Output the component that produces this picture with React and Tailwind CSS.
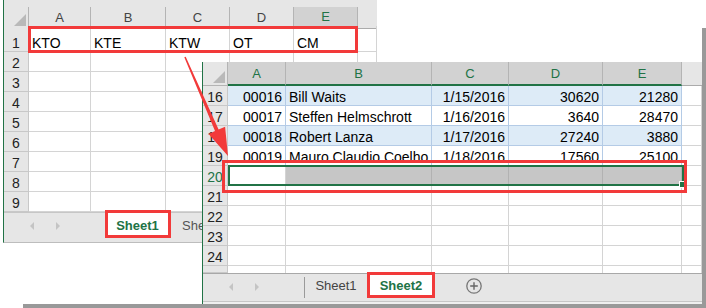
import React from 'react';

// two overlapping Excel windows with red call-out boxes and an arrow
const W1 = 'grid grid-cols-[25px_62px_75px_64px_64px_64px_19px]';
const W2 = 'grid grid-cols-[25px_58px_146px_77px_94px_79px_20px]';

function Corner() {
  return (
    <div className="flex items-end justify-end pr-[2px] pb-[2px] bg-[#e6e6e6] border-r border-b border-[#b4b4b4]">
      <span className="w-0 h-0 border-l-[12px] border-l-transparent border-b-[12px] border-b-[#b9b9b9]" />
    </div>
  );
}

function Arrows() {
  return (
    <div className="flex items-center gap-[22px] pl-[26px] w-[101px] h-[25px]">
      <span className="w-0 h-0 border-y-[4px] border-y-transparent border-r-[4px] border-r-[#c4c4c4]" />
      <span className="w-0 h-0 border-y-[4px] border-y-transparent border-l-[4px] border-l-[#c4c4c4]" />
    </div>
  );
}

const rowHead = 'flex items-end justify-center pb-[1px] bg-[#e6e6e6] border-r border-b border-[#c8c8c8] text-[14px] leading-[14px] text-[#222] overflow-hidden';
const cell = 'flex items-end px-[3px] border-r border-b text-[14px] leading-[16px] text-black whitespace-nowrap overflow-hidden';

function Window1() {
  const row1 = ['KTO', 'KTE', 'KTW', 'OT', 'CM'];
  return (
    <div className="absolute left-[3px] top-0 w-[374px] h-[243px] flex flex-col bg-white border-l border-b border-l-[#217346] border-b-[#bdbdbd]">
      <div className="h-[7px] bg-[#e6e6e6]" />
      <div className={`${W1} h-[19px]`}>
        <Corner />
        {['A', 'B', 'C', 'D'].map((l) => (
          <div key={l} className="flex items-center justify-center bg-[#e6e6e6] border-r border-b border-[#b4b4b4] text-[13px] text-[#444]">
            {l}
          </div>
        ))}
        <div className="flex items-center justify-center bg-[#d2d2d2] border-r border-r-[#b4b4b4] border-b-2 border-b-[#217346] text-[13px] text-[#217346]">
          E
        </div>
        <div className="bg-[#e6e6e6] border-b border-[#ababab]" />
      </div>
      <div className={`${W1} h-[26px]`}>
        <div className={rowHead}>1</div>
        {row1.map((t) => (
          <div key={t} className={`${cell} border-[#d4d4d4]`}>{t}</div>
        ))}
        <div className={`${cell} border-[#d4d4d4]`} />
      </div>
      {[2, 3, 4, 5, 6, 7, 8, 9].map((n) => (
        <div key={n} className={`${W1} h-[20px]`}>
          <div className={rowHead}>{n}</div>
          {[0, 1, 2, 3, 4, 5].map((i) => (
            <div key={i} className="border-r border-b border-[#d4d4d4]" />
          ))}
        </div>
      ))}
      <div className="flex items-start h-[30px] bg-[#e6e6e6] border-t border-[#c6c6c6] text-[13px]">
        <Arrows />
        <div className="flex items-center justify-center w-[65px] h-[25px] bg-white font-bold text-[#217346]">Sheet1</div>
        {/* the rest of this tab is hidden under the front window */}
        <div className="flex items-center w-[32px] h-[25px] pl-[12px] text-[#555] whitespace-nowrap overflow-hidden">Sheet2</div>
      </div>
    </div>
  );
}

const data = [
  [16, '00016', 'Bill Waits', '1/15/2016', '30620', '21280'],
  [17, '00017', 'Steffen Helmschrott', '1/16/2016', '3640', '28470'],
  [18, '00018', 'Robert Lanza', '1/17/2016', '27240', '3880'],
  [19, '00019', 'Mauro Claudio Coelho', '1/18/2016', '17560', '25100'],
];
const align = ['justify-end', 'justify-start', 'justify-end', 'justify-end', 'justify-end'];

function Window2() {
  return (
    <div className="absolute left-[202px] top-[62px] w-[500px] h-[242px] flex flex-col bg-white border-l border-[#217346]">
      <div className={`${W2} h-[24px]`}>
        <Corner />
        {['A', 'B', 'C', 'D', 'E'].map((l) => (
          <div key={l} className="flex items-center justify-center pt-[2px] bg-[#d2d2d2] border-r border-r-[#b4b4b4] border-b-2 border-b-[#217346] text-[13px] text-[#217346]">
            {l}
          </div>
        ))}
        <div className="bg-[#e6e6e6] border-b border-[#ababab]" />
      </div>
      {data.map(([n, ...vals]) => (
        <div key={n} className={`${W2} h-[20px]`}>
          <div className={rowHead}>{n}</div>
          {vals.map((v, i) => (
            <div key={i} className={`${cell} ${align[i]} border-[#b4cbe6] ${n % 2 === 0 ? 'bg-[#ddebf7]' : 'bg-white'}`}>
              {v}
            </div>
          ))}
          <div className="border-r border-b border-[#d4d4d4]" />
        </div>
      ))}
      <div className={`${W2} h-[20px]`}>
        <div className={`${rowHead} bg-[#d2d2d2] text-[#217346]`}>20</div>
        <div className="bg-white border-r border-b border-[#d4d4d4]" />
        {[0, 1, 2, 3].map((i) => (
          <div key={i} className="bg-[#c6c6c6] border-r border-b border-[#b2b2b2]" />
        ))}
        <div className="border-r border-b border-[#d4d4d4]" />
      </div>
      {[21, 22, 23, 24, 25].map((n) => (
        <div key={n} className={`${W2} ${n === 25 ? 'h-[7px]' : 'h-[20px]'}`}>
          <div className={rowHead}>{n === 25 ? '' : n}</div>
          {[0, 1, 2, 3, 4, 5].map((i) => (
            <div key={i} className={`border-r border-[#d4d4d4] ${n === 25 ? '' : 'border-b'}`} />
          ))}
        </div>
      ))}
      <div className="flex items-start h-[28px] bg-[#e6e6e6] border-t border-[#a8a8a8] text-[13px]">
        <Arrows />
        <div className="w-px h-[21px] mt-[3px] bg-[#9a9a9a]" />
        <div className="flex items-center justify-center w-[62px] h-[24px] text-[#444]">Sheet1</div>
        <div className="flex items-center justify-center w-[68px] h-[24px] bg-white font-bold text-[#217346]">Sheet2</div>
        <div className="flex items-center h-[24px] pl-[31px]">
          <svg width="16" height="16" viewBox="0 0 16 16">
            <circle cx="8" cy="8" r="7.2" fill="none" stroke="#777" strokeWidth="1.3" />
            <path d="M8 4.2v7.6M4.2 8h7.6" stroke="#666" strokeWidth="1.4" />
          </svg>
        </div>
      </div>
      <div className="h-[3px] bg-[#efefef] border-t border-[#c6c6c6]" />
    </div>
  );
}

export default function App() {
  return (
    <div className="relative w-[706px] h-[308px] bg-white overflow-hidden font-['Liberation_Sans',Arial,sans-serif]">
      {/* shadow behind the front window */}
      <div className="absolute left-[702px] top-[28px] w-[4px] h-[280px] bg-[#999]" />
      <div className="absolute left-[23px] top-[304px] w-[683px] h-[4px] bg-[#999]" />

      <Window1 />
      <Window2 />

      {/* selected row 20 */}
      <div className="absolute left-[228px] top-[165px] w-[456px] h-[21px] border-2 border-[#217346]" />
      <div className="absolute left-[679px] top-[181px] w-[7px] h-[7px] bg-[#217346] border border-white" />

      {/* red call-outs */}
      <div className="absolute left-[28px] top-[26px] w-[330px] h-[27px] border-[3px] border-[#f23a3a]" />
      <div className="absolute left-[105px] top-[210px] w-[66px] h-[28px] border-[3px] border-[#f23a3a]" />
      <div className="absolute left-[222px] top-[160px] w-[465px] h-[33px] border-[3px] border-[#f23a3a]" />
      <div className="absolute left-[367px] top-[272px] w-[68px] h-[26px] border-[3px] border-[#f23a3a]" />

      <svg className="absolute left-0 top-0 pointer-events-none" width="706" height="308">
        <polygon
          points="184.3,57.3 215,131.1 208.6,133.9 228,156 225.1,126.7 218.6,129.5 185.7,56.7"
          fill="#f23a3a"
        />
      </svg>
    </div>
  );
}
